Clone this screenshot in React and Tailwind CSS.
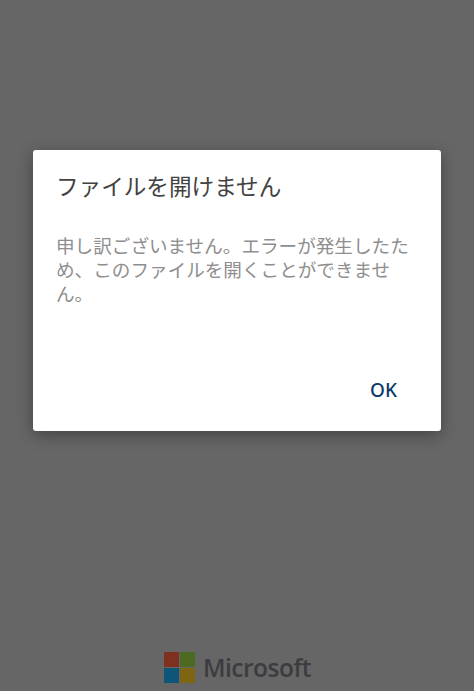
export default function App() {
  return (
    <div className="h-[691px] w-[474px] overflow-hidden bg-[#666666] flex flex-col items-center font-['Roboto','Noto_Sans_CJK_JP',sans-serif]">
      <div className="mt-[150px] h-[281px] w-[408px] rounded-[3px] bg-white pl-[24px] pr-[24px] pt-[23px] shadow-[0_4px_16px_rgba(0,0,0,0.35)] flex flex-col">
        <h1 className="text-[22.6px] leading-[30px] font-normal text-[#424242] -ml-[1px]">ファイルを開けません</h1>
        <p className="mt-[32px] text-[18.6px] leading-[24px] text-[#8e8e8e] -ml-[1px]">
          申し訳ございません。エラーが発生したため、このファイルを開くことができません。
        </p>
        <div className="mt-auto mb-[28px] flex justify-end pr-[20px]">
          <button className="text-[19px] leading-[26px] font-medium text-[#0b3a6b] font-['Noto_Sans',sans-serif]">OK</button>
        </div>
      </div>
      <div className="mt-[221px] ml-[1px] flex items-center gap-[8px]">
        <svg width="31" height="31" viewBox="0 0 31 31">
          <rect x="0" y="0" width="15" height="15" fill="#7f3120" />
          <rect x="16" y="0" width="15" height="15" fill="#4c6a20" />
          <rect x="0" y="16" width="15" height="15" fill="#0f5578" />
          <rect x="16" y="16" width="15" height="15" fill="#7f6414" />
        </svg>
        <span className="text-[24.5px] leading-[31px] font-semibold text-[#3c3c40] font-['Open_Sans',sans-serif] tracking-[-0.5px]">Microsoft</span>
      </div>
    </div>
  );
}
